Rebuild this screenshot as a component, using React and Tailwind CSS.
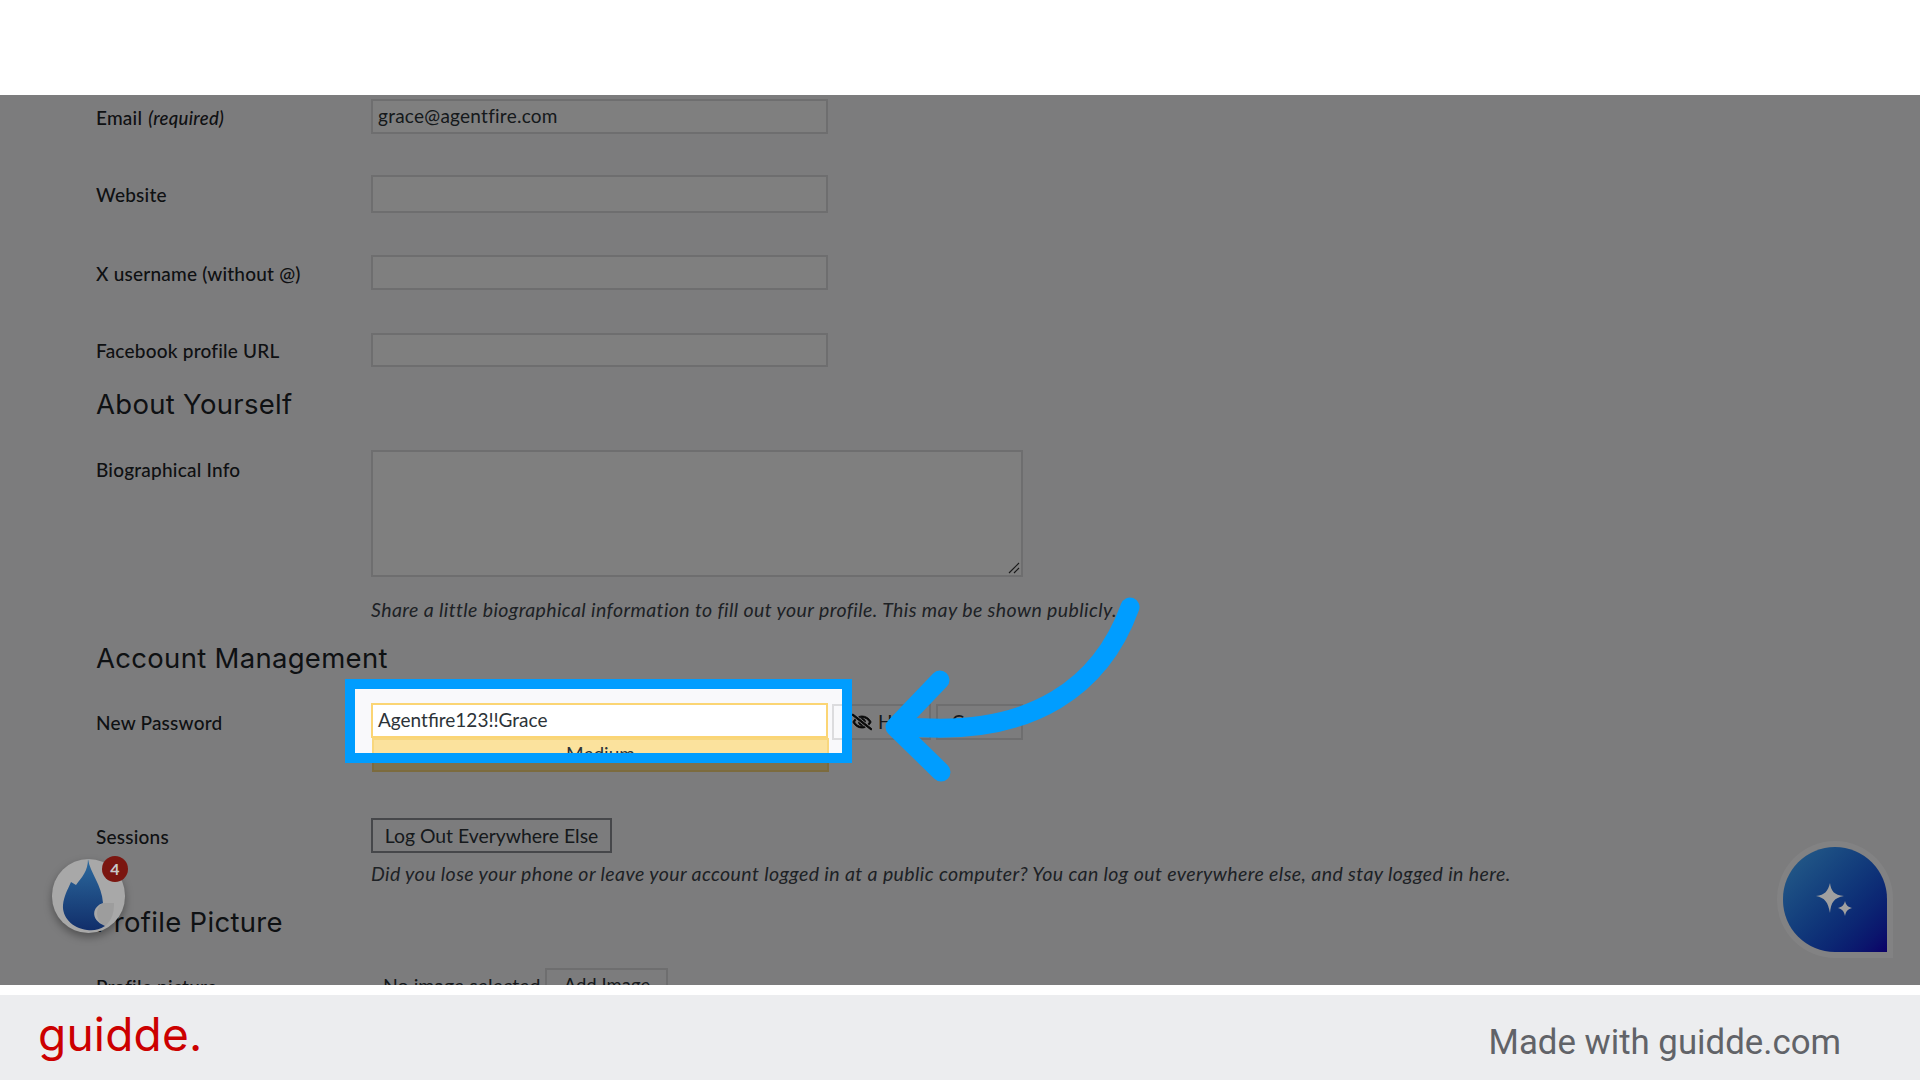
import React from "react";
import { FaRegEyeSlash } from "react-icons/fa";

const body = "font-['Lato','Noto_Sans',sans-serif]";
const heading = "font-['Inter','Noto_Sans',sans-serif] text-[27.5px] tracking-[0.3px] leading-[40px] text-[#1d2327] font-normal h-[40px] mt-[17px]";
const labelCls = "text-[19px] tracking-[0.22px] leading-[26px] pt-[2px] font-medium text-[#1d2327]";
const hintCls = "h-[24px] pt-[1px] text-[19.5px] tracking-[0.4px] leading-[24px] italic text-[#3c434a] whitespace-nowrap";

function Field({ label, required, value, className = "", h = "h-[34px]" }) {
  return (
    <div className={`grid grid-cols-[275px_1fr] items-center ${className}`}>
      <label className={labelCls}>
        {label}
        {required && <em className="ml-[6px] text-[18.5px] tracking-[0.3px] font-medium">(required)</em>}
      </label>
      <div className={`w-[457px] ${h} border-2 border-[#dcdcde] bg-white px-[5px] text-[19px] tracking-[0.25px] leading-[30px] text-[#2c3338]`}>{value}</div>
    </div>
  );
}

function Flame() {
  return (
    <svg viewBox="0 0 73 74" className="w-[73px] h-[74px]">
      <defs>
        <linearGradient id="fl" x1="0" y1="0" x2="0" y2="1">
          <stop offset="0" stopColor="#2c6a9e" />
          <stop offset="1" stopColor="#112e6a" />
        </linearGradient>
      </defs>
      <path d="M51 44 L62 44 C62 54 60 61 53 67 C45 64 41 50 51 44Z" fill="#9d9d9d" />
      <path d="M36 0 C38 14 50 26 51 44 C41 47 37 60 53 67 C47 71 41 72 35 71 C20 69 10 58 11 46 C12 37 15 32 19 23 L24 26 C30 18 36 12 36 0Z" fill="url(#fl)" />
    </svg>
  );
}

export default function App() {
  return (
    <div className={`relative w-[1920px] h-[1080px] flex flex-col overflow-hidden bg-white ${body}`}>
      <header className="h-[95px] shrink-0 bg-white" />

      <main className="relative h-[890px] shrink-0 overflow-hidden bg-[#f9f9fb] px-[96px] pt-[4px]">
        <Field label="Email" required value="grace@agentfire.com" h="h-[35px]" />
        <Field label="Website" className="mt-[41px]" h="h-[38px]" />
        <Field label="X username (without @)" className="mt-[42px]" h="h-[35px]" />
        <Field label="Facebook profile URL" className="mt-[43px]" />

        <h2 className={heading}>About Yourself</h2>

        <div className="grid grid-cols-[275px_1fr] mt-[26px]">
          <label className={`${labelCls} mt-[5px]`}>Biographical Info</label>
          <div className="relative w-[652px] h-[127px] border-2 border-[#dcdcde] bg-white">
            <svg viewBox="0 0 12 12" className="absolute right-[1px] bottom-[1px] w-[12px] h-[12px]" stroke="#333" strokeWidth="1.2">
              <path d="M1 11 L11 1 M6 11 L11 6" />
            </svg>
          </div>
        </div>

        <p className={`mt-[20px] ml-[275px] ${hintCls}`}>
          Share a little biographical information to fill out your profile. This may be shown publicly.
        </p>

        <h2 className={heading}>Account Management</h2>

        <div className="grid grid-cols-[275px_1fr] mt-[25px]">
          <label className={`${labelCls} mt-[5px]`}>New Password</label>
          <div>
            <div className="flex h-[37px]">
              <div className="w-[457px] h-[35px] border-2 border-[#fbd574] bg-white px-[5px] text-[19px] leading-[30px] text-[#2c3338]">Agentfire123!!Grace</div>
              <button className="ml-[4px] mt-[1px] w-[99px] h-[36px] border-2 border-[#dcdcde] flex items-center pl-[18px] gap-[6px] text-[19px] text-[#2c3338]">
                <FaRegEyeSlash className="w-[20px] h-[20px] text-[#111] [stroke-width:28px]" />
                Hide
              </button>
              <button className="ml-[5px] mt-[1px] w-[87px] h-[36px] border-2 border-[#dcdcde] text-[19px] text-[#2c3338]">Cancel</button>
            </div>
            <div className="w-[457px] ml-[1px] -mt-[2px] h-[34px] border-2 border-[#f8d77d] bg-[#fbe29d] text-center text-[19px] leading-[27px] text-[#2c3338]">Medium</div>
          </div>
        </div>

        <div className="grid grid-cols-[275px_1fr] mt-[46px] items-center">
          <label className={labelCls}>Sessions</label>
          <button className="w-[241px] h-[35px] border-2 border-[#8c8f94] text-[19.4px] text-[#2c3338]">Log Out Everywhere Else</button>
        </div>
        <p className={`mt-[8px] ml-[275px] ${hintCls}`}>
          Did you lose your phone or leave your account logged in at a public computer? You can log out everywhere else, and stay logged in here.
        </p>

        <h2 className={heading}>Profile Picture</h2>

        <div className="grid grid-cols-[275px_1fr] mt-[26px] items-center">
          <label className={`${labelCls} font-bold`}>Profile picture</label>
          <div className="flex items-center pl-[12px] gap-[5px] text-[19.5px] text-[#2c3338]">
            <span>No image selected</span>
            <button className="w-[123px] h-[36px] border-2 border-[#dcdcde] text-[18.5px]">Add Image</button>
          </div>
        </div>

        {/* dimming overlay with a spotlight hole and its blue frame */}
        <div className="absolute left-[345px] top-[584px] w-[507px] h-[84px] border-[10px] border-[#009dff] shadow-[0_0_0_3000px_rgba(0,0,0,0.5)]" />

        {/* helper widget */}
        <div className="absolute left-[52px] top-[764px] w-[73px] h-[74px] rounded-full bg-[#a8a8a8] shadow-[0_4px_8px_rgba(0,0,0,0.35)]">
          <Flame />
          <span className="absolute -top-[3px] left-[50px] w-[26px] h-[26px] rounded-full bg-[#7b1610] text-center text-[16px] leading-[26px] font-bold text-[#c9c9c9]">4</span>
        </div>

        {/* assistant bubble */}
        <div className="absolute left-[1783px] top-[752px] w-[104px] h-[105px] rounded-t-full rounded-bl-full bg-gradient-to-br from-[#28608a] to-[#0c0068] shadow-[0_0_0_6px_rgba(255,255,255,0.05)] flex items-center justify-center">
          <svg viewBox="0 0 40 40" className="w-[40px] h-[40px]" fill="#a0a0a0">
            <path d="M15 3 C16 11 19 15 29 16 C19 18 16 22 15 33 C13 22 10 18 1 16 C10 15 13 11 15 3Z" />
            <path d="M30 21 C31 25 33 27 37 28 C33 29 31 31 30 36 C29 31 27 29 23 28 C27 27 29 25 30 21Z" />
          </svg>
        </div>

        {/* guide arrow */}
        <svg className="absolute left-0 top-0 w-[1300px] h-[890px] pointer-events-none" viewBox="0 0 1300 890" fill="none" stroke="#009dff" strokeWidth="19" strokeLinecap="round" strokeLinejoin="round">
          <path d="M1130 512 C1100 595 1030 636 930 633 L897 632" />
          <path d="M940 585 L895 632 L941 677" />
        </svg>
      </main>

      <div className="h-[10px] shrink-0 bg-white" />

      <footer className="flex-1 bg-[#ecedef] flex items-center justify-between pl-[38px] pr-[79px]">
        <span className="font-['Inter',sans-serif] font-normal text-[46px] tracking-[0.2px] leading-none text-[#cc0000] -mt-[7px]">guidde.</span>
        <span className="font-['Roboto',sans-serif] text-[34.8px] text-[#616368] mt-[9px]">Made with guidde.com</span>
      </footer>
    </div>
  );
}
